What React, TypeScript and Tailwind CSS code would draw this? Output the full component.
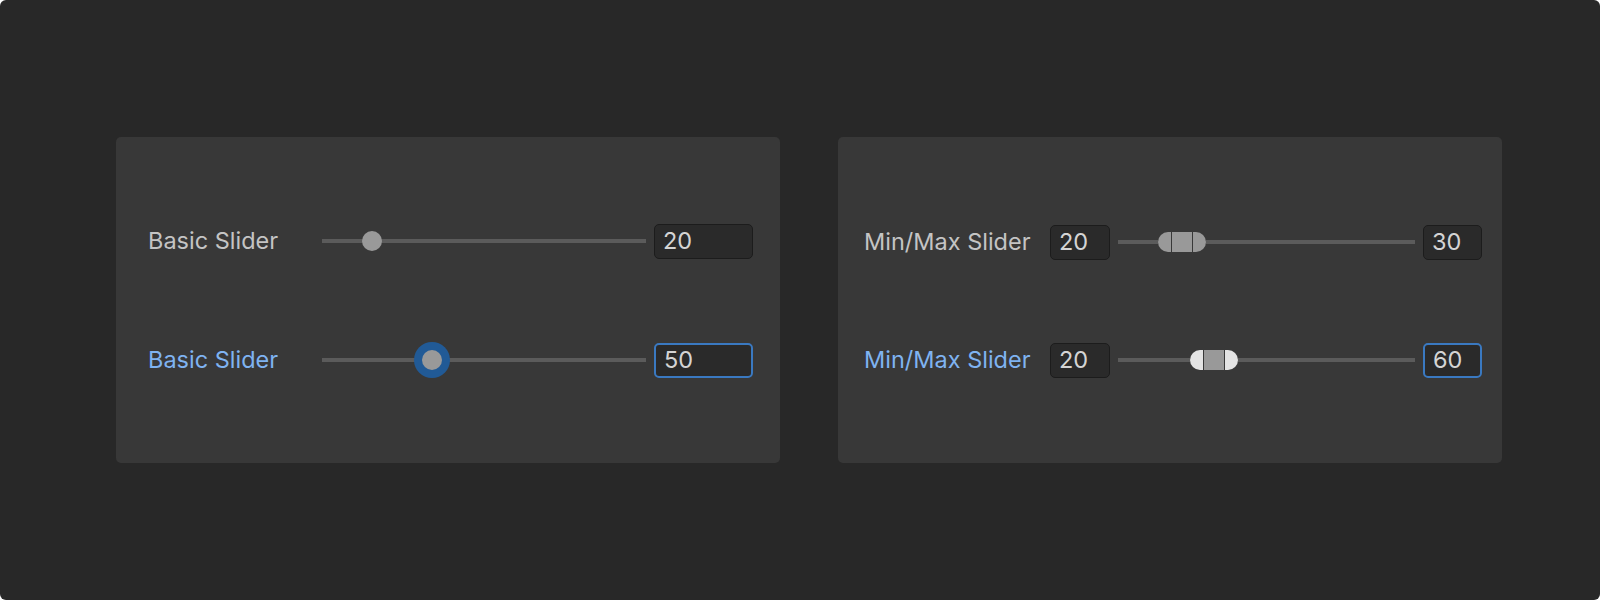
import React from "react";

interface BasicRowProps {
  label: string;
  value: number;
  thumbOffset: number;
  focused?: boolean;
}

// single-value slider row
const BasicRow: React.FC<BasicRowProps> = ({ label, value, thumbOffset, focused = false }) => {
  return (
    <div className="flex items-center h-[35px]">
      <div
        className={`w-[174px] shrink-0 text-[23.5px] leading-none ${
          focused ? "text-[#7fb3f1]" : "text-[#c4c4c4]"
        }`}
      >
        {label}
      </div>
      <div className="relative flex-1 h-[20px] flex items-center">
        <div className="w-full h-[4px] bg-[#5b5b5b]" />
        <div className="absolute top-1/2 -translate-y-1/2 -translate-x-1/2" style={{ left: thumbOffset }}>
          {focused ? (
            <div className="w-[36px] h-[36px] rounded-full bg-[#215a96] flex items-center justify-center">
              <div className="w-[20px] h-[20px] rounded-full bg-[#999999]" />
            </div>
          ) : (
            <div className="w-[20px] h-[20px] rounded-full bg-[#999999]" />
          )}
        </div>
      </div>
      <input
        readOnly
        value={value}
        className={`ml-[8px] w-[99px] h-[35px] shrink-0 rounded-[5px] bg-[#2a2a2a] pl-[8px] text-[23.5px] text-[#d4d4d4] outline-none ${
          focused ? "border-2 border-[#3a79c1] pl-[7px]" : "border border-[#1c1c1c]"
        }`}
      />
    </div>
  );
};

interface MinMaxRowProps {
  label: string;
  min: number;
  max: number;
  thumbOffset: number;
  focused?: boolean;
}

// range slider row with min and max fields
const MinMaxRow: React.FC<MinMaxRowProps> = ({ label, min, max, thumbOffset, focused = false }) => {
  const cap = focused ? "bg-[#e4e4e4]" : "bg-[#999999]";
  return (
    <div className="flex items-center h-[35px]">
      <div
        className={`w-[186px] shrink-0 text-[23.5px] leading-none ${
          focused ? "text-[#7fb3f1]" : "text-[#c4c4c4]"
        }`}
      >
        {label}
      </div>
      <input
        readOnly
        value={min}
        className="w-[60px] h-[35px] shrink-0 rounded-[5px] bg-[#2a2a2a] border border-[#1c1c1c] pl-[8px] text-[23.5px] text-[#d4d4d4] outline-none"
      />
      <div className="relative flex-1 mx-[8px] h-[20px] flex items-center">
        <div className="w-full h-[4px] bg-[#5b5b5b]" />
        <div className="absolute top-0 flex h-[20px] gap-px bg-[#383838]" style={{ left: thumbOffset }}>
          <div className={`w-[13px] h-full rounded-l-full ${cap}`} />
          <div className="w-[20px] h-full bg-[#999999]" />
          <div className={`w-[13px] h-full rounded-r-full ${cap}`} />
        </div>
      </div>
      <input
        readOnly
        value={max}
        className={`w-[59px] h-[35px] shrink-0 rounded-[5px] bg-[#2a2a2a] pl-[8px] text-[23.5px] text-[#d4d4d4] outline-none ${
          focused ? "border-2 border-[#3a79c1] pl-[7px]" : "border border-[#1c1c1c]"
        }`}
      />
    </div>
  );
};

export default function App() {
  return (
    <div className="w-[1600px] h-[600px] bg-white font-['Inter',sans-serif]">
      <div className="w-full h-full rounded-[6px] bg-[#282828] flex items-center pl-[116px] gap-[58px]">
        {/* Basic sliders */}
        <div className="w-[664px] h-[326px] rounded-[5px] bg-[#383838] flex flex-col justify-center gap-[84px] pl-[32px] pr-[27px] pt-[1px]">
          <BasicRow label="Basic Slider" value={20} thumbOffset={50} />
          <BasicRow label="Basic Slider" value={50} thumbOffset={110} focused />
        </div>

        {/* Min/Max sliders */}
        <div className="w-[664px] h-[326px] rounded-[5px] bg-[#383838] flex flex-col justify-center gap-[83px] pl-[26px] pr-[20px] pt-[2px]">
          <MinMaxRow label="Min/Max Slider" min={20} max={30} thumbOffset={40} />
          <MinMaxRow label="Min/Max Slider" min={20} max={60} thumbOffset={72} focused />
        </div>
      </div>
    </div>
  );
}
